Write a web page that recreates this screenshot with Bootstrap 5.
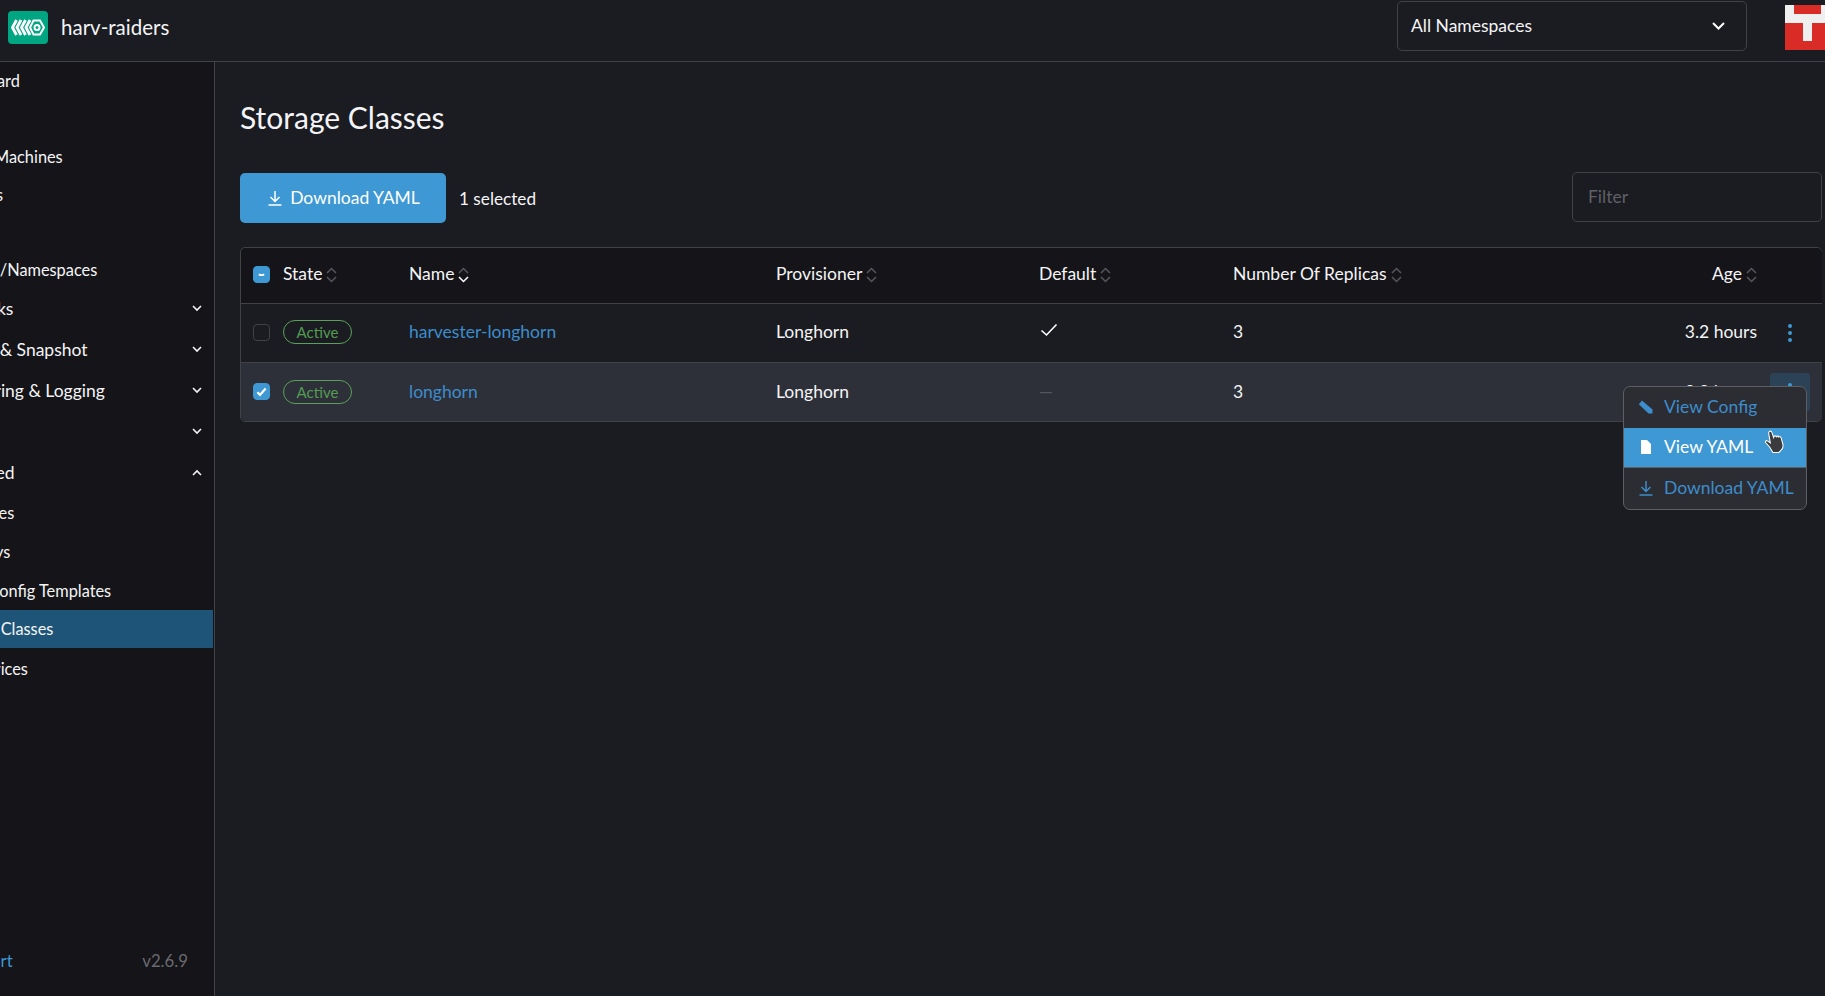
<!DOCTYPE html>
<html lang="en">
<head>
    <meta charset="UTF-8">
    <meta name="viewport" content="width=device-width, initial-scale=1.0">
    <title>Storage Classes</title>
    <link href="https://cdn.jsdelivr.net/npm/bootstrap@5.3.0/dist/css/bootstrap.min.css" rel="stylesheet">
    <style>
        html, body { height: 100%; overflow: hidden; }
        body { background: #1b1c21; color: #f4f4f6; font-family: "Lato", "Liberation Sans", sans-serif; font-size: 17.5px; }

        .top-bar { height: 62px; padding-bottom: 7px; border-bottom: 1px solid #414248; flex: none; }
        .logo-box { width: 40px; height: 33px; margin-left: 8px; background: #00a582; border-radius: 4px; }
        .cluster-name { font-size: 20.5px; margin-left: 13px; }
        .ns-picker { width: 350px; height: 50px; margin-top: -2px; margin-left: auto; padding: 0 21px 0 13px; border: 1px solid #414248; border-radius: 5px; }
        .avatar-wrap { width: 40px; height: 45px; margin-left: 38px; margin-top: 1px; }

        .side-panel { width: 215px; flex: none; background: #141419; border-right: 1px solid #414248; overflow: hidden; font-size: 16.33px; }
        .side-list { padding-top: .5px; }
        .side-item { height: 37.8px; white-space: nowrap; color: #f4f4f6; padding-right: 12px; }
        .side-label { margin-left: -58px; }
        .side-item.grp { height: 41px; font-size: 17.5px; }
        .side-item.grp .side-label { margin-left: -61.5px; }
        .side-item.grp-first { margin-top: -1px; }
        .side-item.sub { height: 39px; }
        .side-item.current { background: #1d5478; margin-right: 1px; height: 38px; margin-bottom: 1px; }
        .side-foot { height: 48px; padding: 0 26px 0 0; white-space: nowrap; font-size: 16.8px; }
        .support-link { color: #3d98d3; margin-left: -46px; }
        .ver-text { color: #6a6b70; }

        .page-body { padding: 35px 3px 0 25px; min-width: 0; }
        .page-title { font-size: 30px; line-height: 40px; font-weight: 400; margin: 0 0 35px; }
        .toolbar-row { height: 51px; margin-bottom: 24px; }
        .yaml-btn { width: 206px; height: 50px; margin-top: 1px; padding-left: 14px; background: #3d98d3; border: 0; border-radius: 5px; color: #fff; font-size: 17.5px; gap: 8px; }
        .yaml-btn:hover { background: #3d98d3; color: #fff; }
        .sel-count { margin-left: 13px; margin-top: 3px; font-size: 17.2px; }
        .filter-input { width: 250px; height: 50px; margin-left: auto; padding: 0 15px 2px; background: transparent; border: 1px solid #414248; border-radius: 5px; color: #fff; font-size: 17.5px; }
        .filter-input::placeholder { color: #5f6067; }

        .grid-wrap { border: 1px solid #414248; border-radius: 5px; position: relative; }
        .grid-table { margin: 0; table-layout: fixed; --bs-table-bg: transparent; --bs-table-color: #f4f4f6; --bs-table-border-color: #414248; color: #f4f4f6; }
        .grid-table th { font-weight: 400; height: 55px; background: #141419; padding: 0 8px 2px; vertical-align: middle; border-bottom: 1px solid #414248; white-space: nowrap; }
        .grid-table td { height: 59px; padding: 0 8px; vertical-align: middle; background: #1b1c21; border-bottom: 1px solid #414248; }
        .grid-table tr:first-child th:first-child { border-top-left-radius: 5px; }
        .grid-table tr:first-child th:last-child { border-top-right-radius: 5px; }
        .grid-table tbody tr:last-child td { border-bottom: 0; height: 59px; }
        .grid-table tbody tr:last-child td:first-child { border-bottom-left-radius: 5px; }
        .grid-table tbody tr:last-child td:last-child { border-bottom-right-radius: 5px; }
        .grid-table tr.picked td { background: #2e3039; }
        .grid-table .form-check-input { width: 17px; height: 17px; margin: 0 0 0 4px; display: block; background-color: transparent; border: 1px solid #414248; border-radius: 4px; }
        .grid-table .form-check-input:checked { background-color: #3d98d3; border-color: #3d98d3; background-image: url("data:image/svg+xml,%3csvg xmlns='http://www.w3.org/2000/svg' viewBox='0 0 20 20'%3e%3cpath fill='none' stroke='%23fff' stroke-width='3' d='M4.500 11l3.500 3.500 7.500-8.500'/%3e%3c/svg%3e"); }
        .grid-table .form-check-input:indeterminate { background-color: #3d98d3; border-color: #3d98d3; background-image: url("data:image/svg+xml,%3csvg xmlns='http://www.w3.org/2000/svg' viewBox='0 0 20 20'%3e%3cpath fill='none' stroke='%23fff' stroke-width='2.500' d='M6.500 9.500c2 1.500 5 1.500 7 0'/%3e%3c/svg%3e"); }
        .sort-ico { margin-left: 4px; vertical-align: -3px; }
        .name-link { color: #3d8ccb; text-decoration: none; }
        .state-pill { display: inline-block; width: 69px; height: 24px; line-height: 22px; text-align: center; border: 1px solid #5aa05a; border-radius: 12px; color: #539b53; font-size: 15px; }
        .no-value { color: #55565c; }
        .default-tick { display: block; margin: -5px 0 0 1px; }
        .kebab-btn { width: 40px; height: 38px; margin-left: -3px; }
        .kebab-btn.open { background: #2b4257; border-radius: 3px; }

        .row-menu { display: block; position: absolute; top: 138px; right: 14px; width: 184px; min-width: 0; padding: 0; background: #2c2d33; border: 1px solid #5e5f65; border-radius: 7px; overflow: hidden; }
        .row-menu .dropdown-item { height: 40.5px; padding: 0 0 0 14px; color: #3d8ccb; gap: 10px; font-size: 17.5px; }
        .row-menu .dropdown-item.on { background: #3d98d3; color: #fff; border-bottom: 1px solid #5e5f65; }
        .menu-ico { width: 16px; flex: none; }
        .hand-cursor { position: absolute; top: 182px; right: 35px; z-index: 1001; }
    </style>
</head>
<body class="d-flex flex-column">

    <!-- Header -->
    <header class="top-bar d-flex align-items-center">
        <div class="logo-box d-flex align-items-center justify-content-center">
            <svg width="34" height="17" viewBox="0 0 34 17" fill="none" stroke="#fff">
                <path d="M5.500 1 1.500 8.500l4 7.500M10 1 6 8.500l4 7.500M14.500 1l-4 7.500 4 7.500M19 1l-4 7.500 4 7.500" stroke-width="2.800"/>
                <path d="M22.500 1.500h6.500l4 7-4 7h-6.500l-3.500-7z" stroke-width="2"/>
                <circle cx="26" cy="8.500" r="2.500" stroke-width="2"/>
            </svg>
        </div>
        <div class="cluster-name">harv-raiders</div>
        <div class="ns-picker d-flex align-items-center justify-content-between">
            <span>All Namespaces</span>
            <svg width="13" height="8" viewBox="0 0 13 8" fill="none" stroke="#fff" stroke-width="2"><path d="M1 1l5.500 5.500L12 1"/></svg>
        </div>
        <div class="avatar-wrap">
            <svg width="40" height="45" viewBox="0 0 40 45">
                <rect width="40" height="45" fill="#d92c27"/>
                <rect width="9" height="9" fill="#efefef"/>
                <rect x="36" width="4" height="9" fill="#efefef"/>
                <rect y="9" width="40" height="9" fill="#efefef"/>
                <rect x="18" y="18" width="9" height="18" fill="#efefef"/>
            </svg>
        </div>
    </header>

    <div class="d-flex flex-grow-1" style="min-height:0">
        <!-- Sidebar, scrolled off to the left in the reference -->
        <aside class="side-panel d-flex flex-column justify-content-between">
            <div class="side-list">
                <div class="side-item d-flex align-items-center"><span class="side-label">Dashboard</span></div>
                <div class="side-item d-flex align-items-center"><span class="side-label">Hosts</span></div>
                <div class="side-item d-flex align-items-center"><span class="side-label">Virtual Machines</span></div>
                <div class="side-item d-flex align-items-center"><span class="side-label">Volumes</span></div>
                <div class="side-item d-flex align-items-center"><span class="side-label">Images</span></div>
                <div class="side-item d-flex align-items-center"><span class="side-label">Projects/Namespaces</span></div>
                <div class="side-item grp grp-first d-flex align-items-center justify-content-between"><span class="side-label">Networks</span><svg width="10" height="7" viewBox="0 0 10 7" fill="none" stroke="#f4f4f6" stroke-width="1.600"><path d="M1 1l4 4 4-4"/></svg></div>
                <div class="side-item grp d-flex align-items-center justify-content-between"><span class="side-label">Backup &amp; Snapshot</span><svg width="10" height="7" viewBox="0 0 10 7" fill="none" stroke="#f4f4f6" stroke-width="1.600"><path d="M1 1l4 4 4-4"/></svg></div>
                <div class="side-item grp d-flex align-items-center justify-content-between"><span class="side-label">Monitoring &amp; Logging</span><svg width="10" height="7" viewBox="0 0 10 7" fill="none" stroke="#f4f4f6" stroke-width="1.600"><path d="M1 1l4 4 4-4"/></svg></div>
                <div class="side-item grp d-flex align-items-center justify-content-between"><span class="side-label">Users</span><svg width="10" height="7" viewBox="0 0 10 7" fill="none" stroke="#f4f4f6" stroke-width="1.600"><path d="M1 1l4 4 4-4"/></svg></div>
                <div class="side-item grp d-flex align-items-center justify-content-between"><span class="side-label">Advanced</span><svg width="10" height="7" viewBox="0 0 10 7" fill="none" stroke="#f4f4f6" stroke-width="1.600"><path d="M1 6l4-4 4 4"/></svg></div>
                <div class="side-item sub d-flex align-items-center"><span class="side-label">Templates</span></div>
                <div class="side-item sub d-flex align-items-center"><span class="side-label">SSH Keys</span></div>
                <div class="side-item sub d-flex align-items-center"><span class="side-label">Cloud Config Templates</span></div>
                <div class="side-item sub current d-flex align-items-center"><span class="side-label">Storage Classes</span></div>
                <div class="side-item sub d-flex align-items-center"><span class="side-label">PCI Devices</span></div>
            </div>
            <div class="side-foot d-flex align-items-start justify-content-between">
                <span class="support-link">Support</span>
                <span class="ver-text">v2.6.9</span>
            </div>
        </aside>

        <!-- Main -->
        <main class="page-body flex-grow-1">
            <h1 class="page-title">Storage Classes</h1>

            <div class="toolbar-row d-flex align-items-start">
                <button class="btn yaml-btn d-flex align-items-center justify-content-center">
                    <svg width="14" height="15" viewBox="0 0 14 15" fill="none" stroke="#fff" stroke-width="1.500"><path d="M7 0v10M2.500 6 7 10.500 11.500 6M.5 14h13"/></svg>
                    Download YAML
                </button>
                <span class="sel-count align-self-center">1 selected</span>
                <input type="text" class="filter-input" placeholder="Filter">
            </div>

            <div class="grid-wrap">
                <table class="table grid-table">
                    <colgroup>
                        <col style="width:34px"><col style="width:126px"><col style="width:367px"><col style="width:263px"><col style="width:194px"><col style="width:375px"><col style="width:165px"><col style="width:57px">
                    </colgroup>
                    <thead>
                        <tr>
                            <th><input class="form-check-input" type="checkbox" id="checkAll"></th>
                            <th>State<svg class="sort-ico" width="11" height="16" viewBox="0 0 11 16" fill="none" stroke="#55565c" stroke-width="1.500"><path d="M1 6l4.500-4.500L10 6M1 10l4.500 4.500L10 10"/></svg></th>
                            <th>Name<svg class="sort-ico" width="11" height="16" viewBox="0 0 11 16" fill="none" stroke-width="1.500"><path stroke="#55565c" d="M1 6l4.500-4.500L10 6"/><path stroke="#fff" d="M1 10l4.500 4.500L10 10"/></svg></th>
                            <th>Provisioner<svg class="sort-ico" width="11" height="16" viewBox="0 0 11 16" fill="none" stroke="#55565c" stroke-width="1.500"><path d="M1 6l4.500-4.500L10 6M1 10l4.500 4.500L10 10"/></svg></th>
                            <th>Default<svg class="sort-ico" width="11" height="16" viewBox="0 0 11 16" fill="none" stroke="#55565c" stroke-width="1.500"><path d="M1 6l4.500-4.500L10 6M1 10l4.500 4.500L10 10"/></svg></th>
                            <th>Number Of Replicas<svg class="sort-ico" width="11" height="16" viewBox="0 0 11 16" fill="none" stroke="#55565c" stroke-width="1.500"><path d="M1 6l4.500-4.500L10 6M1 10l4.500 4.500L10 10"/></svg></th>
                            <th class="text-end">Age<svg class="sort-ico" width="11" height="16" viewBox="0 0 11 16" fill="none" stroke="#55565c" stroke-width="1.500"><path d="M1 6l4.500-4.500L10 6M1 10l4.500 4.500L10 10"/></svg></th>
                            <th></th>
                        </tr>
                    </thead>
                    <tbody>
                        <tr>
                            <td><input class="form-check-input" type="checkbox"></td>
                            <td><span class="state-pill">Active</span></td>
                            <td><a class="name-link" href="#">harvester-longhorn</a></td>
                            <td>Longhorn</td>
                            <td><svg class="default-tick" width="18" height="14" viewBox="0 0 18 14" fill="none" stroke="#fff" stroke-width="1.600"><path d="M1.500 7.500 6.500 12 16.500 1.500"/></svg></td>
                            <td>3</td>
                            <td class="text-end">3.2 hours</td>
                            <td><div class="kebab-btn d-flex align-items-center justify-content-center"><svg width="4" height="18" viewBox="0 0 4 18" fill="#3d98d3"><circle cx="2" cy="2" r="2"/><circle cx="2" cy="9" r="2"/><circle cx="2" cy="16" r="2"/></svg></div></td>
                        </tr>
                        <tr class="picked">
                            <td><input class="form-check-input" type="checkbox" checked></td>
                            <td><span class="state-pill">Active</span></td>
                            <td><a class="name-link" href="#">longhorn</a></td>
                            <td>Longhorn</td>
                            <td class="no-value">&mdash;</td>
                            <td>3</td>
                            <td class="text-end">3.2 hours</td>
                            <td><div class="kebab-btn open d-flex align-items-center justify-content-center"><svg width="4" height="18" viewBox="0 0 4 18" fill="#3d98d3"><circle cx="2" cy="2" r="2"/><circle cx="2" cy="9" r="2"/><circle cx="2" cy="16" r="2"/></svg></div></td>
                        </tr>
                    </tbody>
                </table>

                <!-- Row action menu -->
                <ul class="dropdown-menu row-menu">
                    <li><a class="dropdown-item d-flex align-items-center" href="#">
                        <svg class="menu-ico" width="16" height="14" viewBox="0 0 16 14" fill="#3d8ccb"><path d="M4 .5 14.500 9.500v4h-4L.8 4.200z"/></svg>View Config</a></li>
                    <li><a class="dropdown-item on d-flex align-items-center" href="#">
                        <svg class="menu-ico" width="12" height="14" viewBox="0 0 16 14" fill="#fff"><path d="M3 0h6l4 4v10H3z"/></svg>View YAML</a></li>
                    <li><a class="dropdown-item d-flex align-items-center" href="#">
                        <svg class="menu-ico" width="14" height="15" viewBox="0 0 14 15" fill="none" stroke="#3d8ccb" stroke-width="1.500"><path d="M7 0v10M2.500 6 7 10.500 11.500 6M.5 14h13"/></svg>Download YAML</a></li>
                </ul>

                <svg class="hand-cursor" width="22" height="24" viewBox="0 0 21 23">
                    <path d="M5 1.500c1-.8 2.200-.3 2.500.8l1.700 5 .3-1c.6-1 2-.8 2.400.2.500-.9 1.900-.8 2.300.2.600-.6 1.900-.3 2.200.8l1.600 6c.6 2.500-.3 5-2.300 6.500l-1.500 1.500H8.500l-3-5L1.500 12c-.6-1 .4-2.300 1.700-1.600l2.800 2L4.500 3.500c-.1-.8 0-1.600.5-2z" fill="#3b3b3d" stroke="#fff" stroke-width="1"/>
                </svg>
            </div>
        </main>
    </div>

    <script src="https://cdn.jsdelivr.net/npm/bootstrap@5.3.0/dist/js/bootstrap.bundle.min.js"></script>
    <script>
        document.getElementById("checkAll").indeterminate = true;
    </script>
</body>
</html>
